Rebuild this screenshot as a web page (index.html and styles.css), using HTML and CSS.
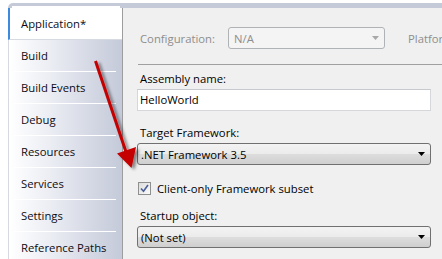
FILE: index.html
```html
<!DOCTYPE html>
<html>
<head>
<meta charset="utf-8">
<link rel="stylesheet" href="styles.css">
</head>
<body>
<div class="frame">
  <div class="topband"><div class="topband-tabs"></div></div>
  <div class="main">
    <nav class="tabs">
      <div class="tab active">Application*</div>
      <div class="tab">Build</div>
      <div class="tab">Build Events</div>
      <div class="tab">Debug</div>
      <div class="tab">Resources</div>
      <div class="tab">Services</div>
      <div class="tab">Settings</div>
      <div class="tab">Reference Paths</div>
    </nav>
    <section class="panel">
      <div class="config-row">
        <span class="dim config-label">Configuration:</span>
        <div class="combo disabled">
          <span>N/A</span>
          <svg class="drop" width="7" height="4" viewBox="0 0 7 4"><path d="M0 0H7L3.5 4Z" fill="#a8a8a8"/></svg>
        </div>
        <span class="dim platform">Platform:</span>
      </div>
      <div class="sep"></div>
      <div class="label">Assembly name:</div>
      <div class="textbox">HelloWorld</div>
      <div class="label gap">Target Framework:</div>
      <div class="combo">
        <span>.NET Framework 3.5</span>
        <svg class="drop" width="7" height="4" viewBox="0 0 7 4"><path d="M0 0H7L3.5 4Z" fill="#000"/></svg>
      </div>
      <div class="check-row">
        <span class="checkbox">
          <svg width="9" height="9" viewBox="0 0 9 9"><path d="M1 4.5L3.5 7.2L8 1" fill="none" stroke="#4a5f97" stroke-width="1.6"/></svg>
        </span>
        <span class="check-label">Client-only Framework subset</span>
      </div>
      <div class="label gap2">Startup object:</div>
      <div class="combo">
        <span>(Not set)</span>
        <svg class="drop" width="7" height="4" viewBox="0 0 7 4"><path d="M0 0H7L3.5 4Z" fill="#000"/></svg>
      </div>
    </section>
  </div>
  <svg class="arrow" width="70" height="130" viewBox="80 50 70 130">
    <defs>
      <filter id="sh" x="-50%" y="-50%" width="200%" height="200%">
        <feDropShadow dx="3" dy="2" stdDeviation="1.6" flood-color="#000" flood-opacity="0.45"/>
      </filter>
    </defs>
    <g filter="url(#sh)">
      <line x1="95.5" y1="61" x2="126" y2="152" stroke="#c40000" stroke-width="3"/>
      <path d="M117 153.5L136 147L131.5 168Z" fill="#c40000"/>
    </g>
  </svg>
</div>
</body>
</html>
```

FILE: styles.css
```css
* { box-sizing: border-box; }
html, body { margin: 0; padding: 0; background: #ffffff; overflow: hidden; }
body {
  font-family: "Open Sans", "Noto Sans", sans-serif;
  font-size: 11.3px;
  color: #000;
  width: 442px;
  height: 259px;
}
.frame {
  position: relative;
  margin: 3px 0 0 8px;
  height: 256px;
  display: flex;
  flex-direction: column;
}
.topband {
  height: 5px;
  background: #c5cad9;
  border-top-left-radius: 5px;
  flex: none;
  display: flex;
  align-items: flex-end;
}
.topband-tabs {
  width: 108px;
  height: 2px;
  margin-left: 4px;
  background: #ffffff;
}
.main {
  flex: 1;
  display: flex;
  min-height: 0;
}
.tabs {
  width: 114px;
  flex: none;
  background: linear-gradient(to right, #ffffff 0%, #eceef4 35%, #d3d7e3 75%, #c5cada 100%);
  border-left: 1px solid #d6d9e0;
  display: flex;
  flex-direction: column;
}
.tab {
  height: 32px;
  line-height: 31px;
  margin: 0 6px 0 4px;
  padding-left: 8px;
  border-bottom: 1px solid #ffffff;
  white-space: nowrap;
  color: #0c0c14;
  flex: none;
}
.tab.active {
  margin: 0 0 0 -1px;
  padding-left: 11px;
  background: #ffffff;
  border-left: 2px solid #3c8be0;
  border-bottom: 1px solid #d7dae2;
}
.panel {
  flex: 1;
  background: #f0f0f0;
  border-left: 1px solid #9d9d9d;
  padding: 19px 0 0 14px;
  display: flex;
  flex-direction: column;
  align-items: flex-start;
  min-width: 0;
}
.config-row {
  display: flex;
  align-items: center;
  height: 22px;
  white-space: nowrap;
}
.dim { color: #8e8e8e; }
.config-label { padding-left: 3px; width: 91px; }
.platform { margin-left: 23px; }
.combo {
  width: 294px;
  height: 22px;
  border: 1px solid #707070;
  border-radius: 3px;
  background: linear-gradient(#f3f3f3 0%, #ebebeb 50%, #dddddd 51%, #cfcfcf 100%);
  display: flex;
  align-items: center;
  justify-content: space-between;
  padding: 0 5px 0 3px;
  flex: none;
}
.combo.disabled {
  width: 157px;
  background: #f4f4f4;
  border-color: #afb3b6;
  color: #8e8e8e;
  padding-left: 5px;
}
.sep {
  margin-top: 15px;
  height: 1px;
  width: calc(100% + 2px);
  margin-left: 1px;
  background: #a0a0a0;
  flex: none;
}
.label {
  margin-top: 6px;
  padding-left: 3px;
  height: 16px;
  line-height: 16px;
  white-space: nowrap;
}
.label.gap { margin-top: 14px; }
.label.gap2 { margin-top: 12px; }
.textbox {
  margin-top: 2px;
  width: 294px;
  height: 22px;
  background: #ffffff;
  border: 1px solid #d5d7da;
  border-top-color: #c6c9cd;
  line-height: 20px;
  padding-left: 2px;
  flex: none;
}
.label + .combo { margin-top: 2px; }
.check-row {
  display: flex;
  align-items: center;
  margin-top: 15px;
  height: 16px;
  padding-left: 1px;
}
.checkbox {
  width: 13px;
  height: 13px;
  border: 1px solid #8e8f8f;
  background: linear-gradient(135deg, #dcdcdc, #fbfbfb);
  display: flex;
  align-items: center;
  justify-content: center;
  flex: none;
}
.check-label { margin-left: 6px; white-space: nowrap; }
.arrow {
  position: absolute;
  left: 72px;
  top: 47px;
  overflow: visible;
}
```
